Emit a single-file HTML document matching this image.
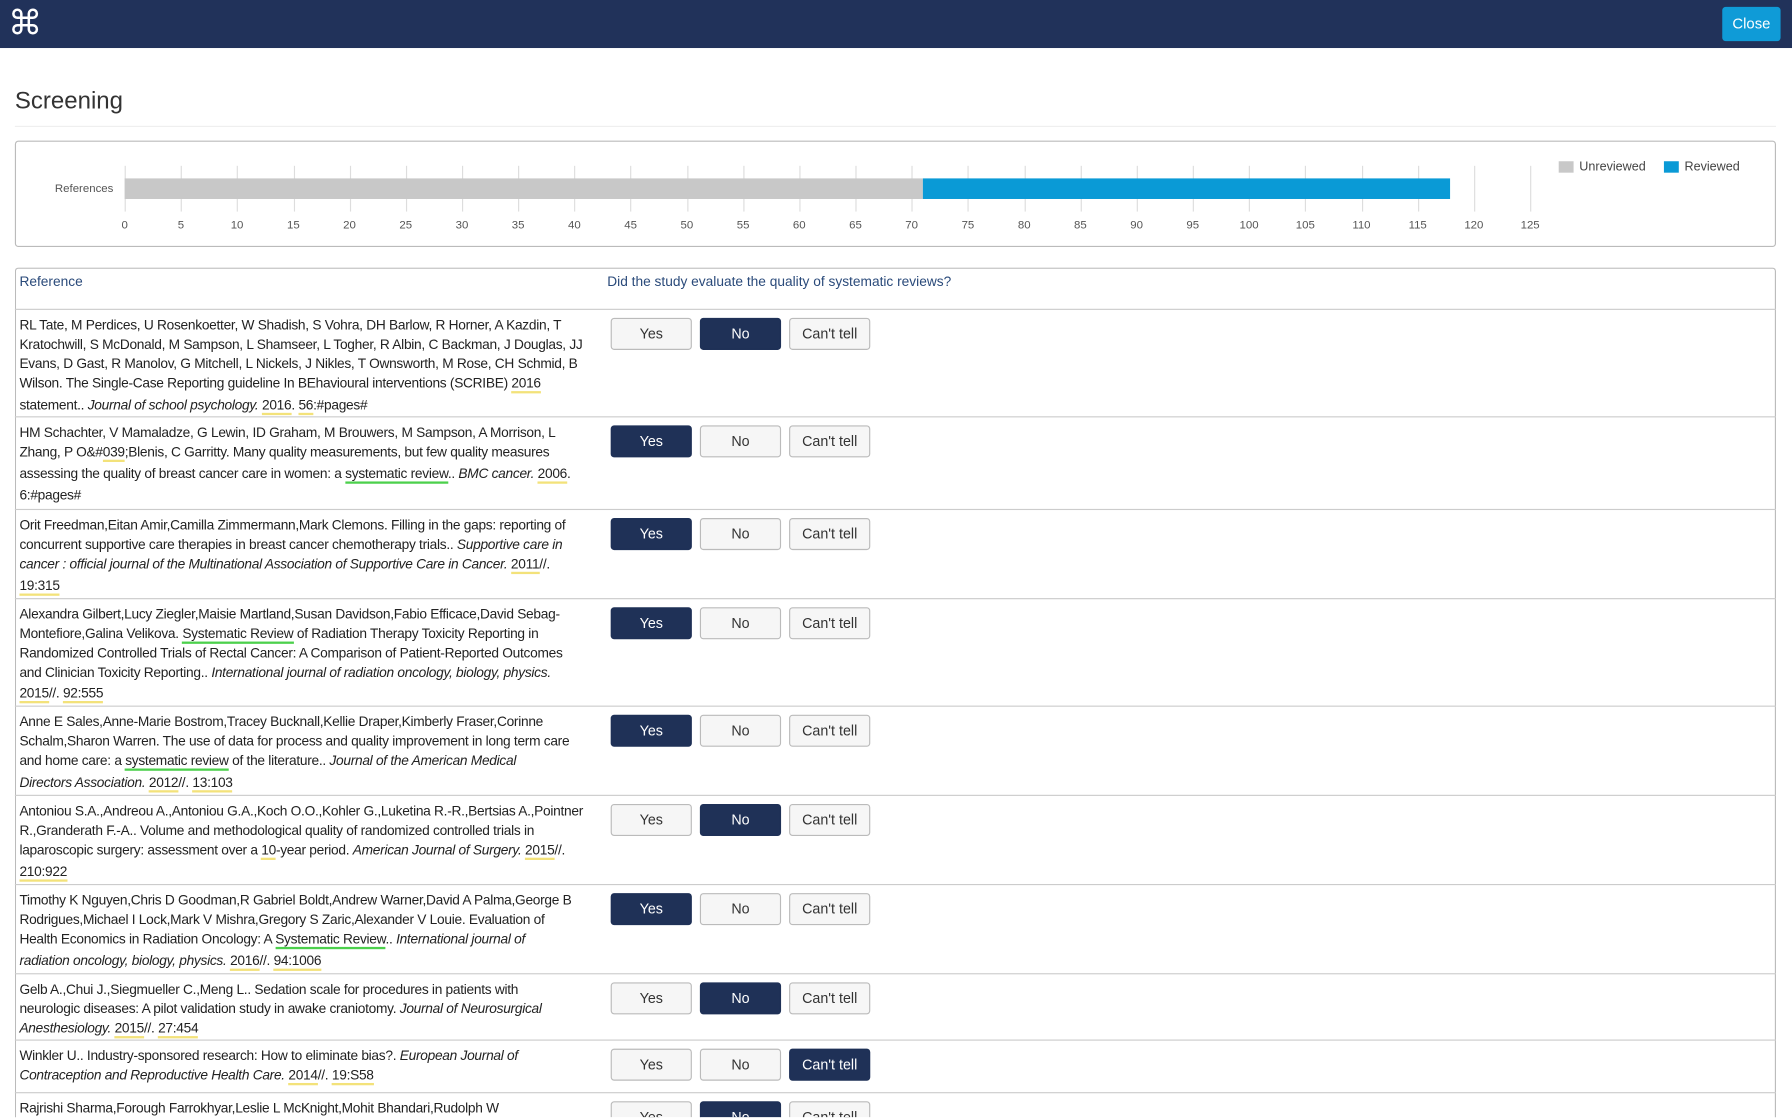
<!DOCTYPE html>
<html><head><meta charset="utf-8">
<style>
html,body{margin:0;padding:0;width:1792px;height:1120px;overflow:hidden;background:#fff}
#w{position:absolute;left:0;top:0;width:1567px;height:977px;overflow:hidden;transform:scale(1.14359);transform-origin:0 0;font-family:"Liberation Sans",sans-serif;color:#333}
.a{position:absolute}
.hdr{left:0;top:0;width:1567px;height:42px;background:#21325a}
.close{left:1506px;top:6px;width:51px;height:30px;background:#0f9bd7;border-radius:3px;color:#fff;font-size:13px;line-height:30px;text-align:center}
.tick{position:absolute;top:145px;width:1px;height:40px;background:#ddd}
.tl{position:absolute;top:192px;font-size:10px;color:#555;width:30px;margin-left:-15px;text-align:center}
.row{position:absolute;left:13px;width:1540px;border-top:1px solid #ccc}
.txt{position:absolute;left:4px;top:5px;font-size:12px;line-height:17px;white-space:nowrap;letter-spacing:-0.25px;color:#222}
.txt div{height:17px}
.b{position:absolute;width:69px;height:26px;border:1px solid #bbb;border-radius:3px;background:#f6f6f6;font-size:12.5px;line-height:26px;text-align:center;color:#333}
.b.s{background:#1f3157;border-color:#1f3157;color:#fff}
.y{border-bottom:2px solid #f3e27a}
.g{border-bottom:2px solid #4cd04c}
i{font-style:italic}
</style></head><body><div id="w">
<div class="a hdr"></div>
<div class="a" style="left:7px;top:3px;color:#fff;font-size:30px;line-height:36px;font-family:'DejaVu Sans',sans-serif">⌘</div>
<div class="a close">Close</div>
<div class="a" style="left:13px;top:77px;font-size:21px;color:#333">Screening</div>
<div class="a" style="left:13px;top:110px;width:1540px;height:1px;background:#eee"></div>
<div class="a" style="left:13px;top:123px;width:1538px;height:91px;border:1px solid #bbb;border-radius:3px"></div>
<div class="a" style="left:48px;top:160px;font-size:10px;color:#555">References</div>
<div id="ticks"></div>
<div class="a" style="left:109px;top:156px;width:698px;height:18px;background:#c8c8c8"></div>
<div class="a" style="left:807px;top:156px;width:461px;height:18px;background:#0a9ad6"></div>
<div class="a" style="left:1363px;top:141px;width:13px;height:10px;background:#c8c8c8"></div>
<div class="a" style="left:1381px;top:140px;font-size:11px;color:#444">Unreviewed</div>
<div class="a" style="left:1455px;top:141px;width:13px;height:10px;background:#0a9ad6"></div>
<div class="a" style="left:1473px;top:140px;font-size:11px;color:#444">Reviewed</div>

<div class="a" style="left:13px;top:234px;width:1538px;height:743px;border:1px solid #bbb;border-bottom:none;border-radius:3px 3px 0 0"></div>
<div class="a" style="left:17px;top:239px;font-size:12px;color:#2a4a7a">Reference</div>
<div class="a" style="left:531px;top:239px;font-size:12px;color:#2a4a7a">Did the study evaluate the quality of systematic reviews?</div>

<div class="row" style="top:270px;height:94px"><div class="txt">
<div>RL Tate, M Perdices, U Rosenkoetter, W Shadish, S Vohra, DH Barlow, R Horner, A Kazdin, T</div>
<div>Kratochwill, S McDonald, M Sampson, L Shamseer, L Togher, R Albin, C Backman, J Douglas, JJ</div>
<div>Evans, D Gast, R Manolov, G Mitchell, L Nickels, J Nikles, T Ownsworth, M Rose, CH Schmid, B</div>
<div>Wilson. The Single-Case Reporting guideline In BEhavioural interventions (SCRIBE) <span class="y">2016</span></div>
<div style="margin-top:2px">statement.. <i>Journal of school psychology.</i> <span class="y">2016</span>. <span class="y">56</span>:#pages#</div></div>
<div class="b" style="left:521px;top:7px">Yes</div><div class="b s" style="left:599px;top:7px">No</div><div class="b" style="left:677px;top:7px">Can't tell</div></div>

<div class="row" style="top:364px;height:81px"><div class="txt">
<div>HM Schachter, V Mamaladze, G Lewin, ID Graham, M Brouwers, M Sampson, A Morrison, L</div>
<div>Zhang, P O&amp;#<span class="y">039</span>;Blenis, C Garritty. Many quality measurements, but few quality measures</div>
<div style="margin-top:2px">assessing the quality of breast cancer care in women: a <span class="g">systematic review</span>.. <i>BMC cancer.</i> <span class="y">2006</span>.</div>
<div style="margin-top:2px">6:#pages#</div></div>
<div class="b s" style="left:521px;top:7px">Yes</div><div class="b" style="left:599px;top:7px">No</div><div class="b" style="left:677px;top:7px">Can't tell</div></div>

<div class="row" style="top:445px;height:78px"><div class="txt">
<div>Orit Freedman,Eitan Amir,Camilla Zimmermann,Mark Clemons. Filling in the gaps: reporting of</div>
<div>concurrent supportive care therapies in breast cancer chemotherapy trials.. <i>Supportive care in</i></div>
<div><i>cancer : official journal of the Multinational Association of Supportive Care in Cancer.</i> <span class="y">2011</span>//.</div>
<div style="margin-top:2px"><span class="y">19:315</span></div></div>
<div class="b s" style="left:521px;top:7px">Yes</div><div class="b" style="left:599px;top:7px">No</div><div class="b" style="left:677px;top:7px">Can't tell</div></div>

<div class="row" style="top:523px;height:94px"><div class="txt">
<div>Alexandra Gilbert,Lucy Ziegler,Maisie Martland,Susan Davidson,Fabio Efficace,David Sebag-</div>
<div>Montefiore,Galina Velikova. <span class="g">Systematic Review</span> of Radiation Therapy Toxicity Reporting in</div>
<div>Randomized Controlled Trials of Rectal Cancer: A Comparison of Patient-Reported Outcomes</div>
<div>and Clinician Toxicity Reporting.. <i>International journal of radiation oncology, biology, physics.</i></div>
<div style="margin-top:1px"><span class="y">2015</span>//. <span class="y">92:555</span></div></div>
<div class="b s" style="left:521px;top:7px">Yes</div><div class="b" style="left:599px;top:7px">No</div><div class="b" style="left:677px;top:7px">Can't tell</div></div>

<div class="row" style="top:617px;height:78px"><div class="txt">
<div>Anne E Sales,Anne-Marie Bostrom,Tracey Bucknall,Kellie Draper,Kimberly Fraser,Corinne</div>
<div>Schalm,Sharon Warren. The use of data for process and quality improvement in long term care</div>
<div>and home care: a <span class="g">systematic review</span> of the literature.. <i>Journal of the American Medical</i></div>
<div style="margin-top:2px"><i>Directors Association.</i> <span class="y">2012</span>//. <span class="y">13:103</span></div></div>
<div class="b s" style="left:521px;top:7px">Yes</div><div class="b" style="left:599px;top:7px">No</div><div class="b" style="left:677px;top:7px">Can't tell</div></div>

<div class="row" style="top:695px;height:78px"><div class="txt">
<div>Antoniou S.A.,Andreou A.,Antoniou G.A.,Koch O.O.,Kohler G.,Luketina R.-R.,Bertsias A.,Pointner</div>
<div>R.,Granderath F.-A.. Volume and methodological quality of randomized controlled trials in</div>
<div>laparoscopic surgery: assessment over a <span class="y">10</span>-year period. <i>American Journal of Surgery.</i> <span class="y">2015</span>//.</div>
<div style="margin-top:2px"><span class="y">210:922</span></div></div>
<div class="b" style="left:521px;top:7px">Yes</div><div class="b s" style="left:599px;top:7px">No</div><div class="b" style="left:677px;top:7px">Can't tell</div></div>

<div class="row" style="top:773px;height:78px"><div class="txt">
<div>Timothy K Nguyen,Chris D Goodman,R Gabriel Boldt,Andrew Warner,David A Palma,George B</div>
<div>Rodrigues,Michael I Lock,Mark V Mishra,Gregory S Zaric,Alexander V Louie. Evaluation of</div>
<div>Health Economics in Radiation Oncology: A <span class="g">Systematic Review</span>.. <i>International journal of</i></div>
<div style="margin-top:2px"><i>radiation oncology, biology, physics.</i> <span class="y">2016</span>//. <span class="y">94:1006</span></div></div>
<div class="b s" style="left:521px;top:7px">Yes</div><div class="b" style="left:599px;top:7px">No</div><div class="b" style="left:677px;top:7px">Can't tell</div></div>

<div class="row" style="top:851px;height:58px"><div class="txt">
<div>Gelb A.,Chui J.,Siegmueller C.,Meng L.. Sedation scale for procedures in patients with</div>
<div>neurologic diseases: A pilot validation study in awake craniotomy. <i>Journal of Neurosurgical</i></div>
<div><i>Anesthesiology.</i> <span class="y">2015</span>//. <span class="y">27:454</span></div></div>
<div class="b" style="left:521px;top:7px">Yes</div><div class="b s" style="left:599px;top:7px">No</div><div class="b" style="left:677px;top:7px">Can't tell</div></div>

<div class="row" style="top:909px;height:46px"><div class="txt">
<div>Winkler U.. Industry-sponsored research: How to eliminate bias?. <i>European Journal of</i></div>
<div><i>Contraception and Reproductive Health Care.</i> <span class="y">2014</span>//. <span class="y">19:S58</span></div></div>
<div class="b" style="left:521px;top:7px">Yes</div><div class="b" style="left:599px;top:7px">No</div><div class="b s" style="left:677px;top:7px">Can't tell</div></div>

<div class="row" style="top:955px;height:21px;overflow:hidden"><div class="txt">
<div>Rajrishi Sharma,Forough Farrokhyar,Leslie L McKnight,Mohit Bhandari,Rudolph W</div></div>
<div class="b" style="left:521px;top:7px">Yes</div><div class="b s" style="left:599px;top:7px">No</div><div class="b" style="left:677px;top:7px">Can't tell</div></div>
</div>
<script>
var t=document.getElementById('ticks'),h='';
for(var i=0;i<=125;i+=5){var x=109+i*9.832;
h+='<div class="tick" style="left:'+x.toFixed(1)+'px"></div><div class="tl" style="left:'+x.toFixed(1)+'px">'+i+'</div>';}
t.innerHTML=h;
</script>
</body></html>
